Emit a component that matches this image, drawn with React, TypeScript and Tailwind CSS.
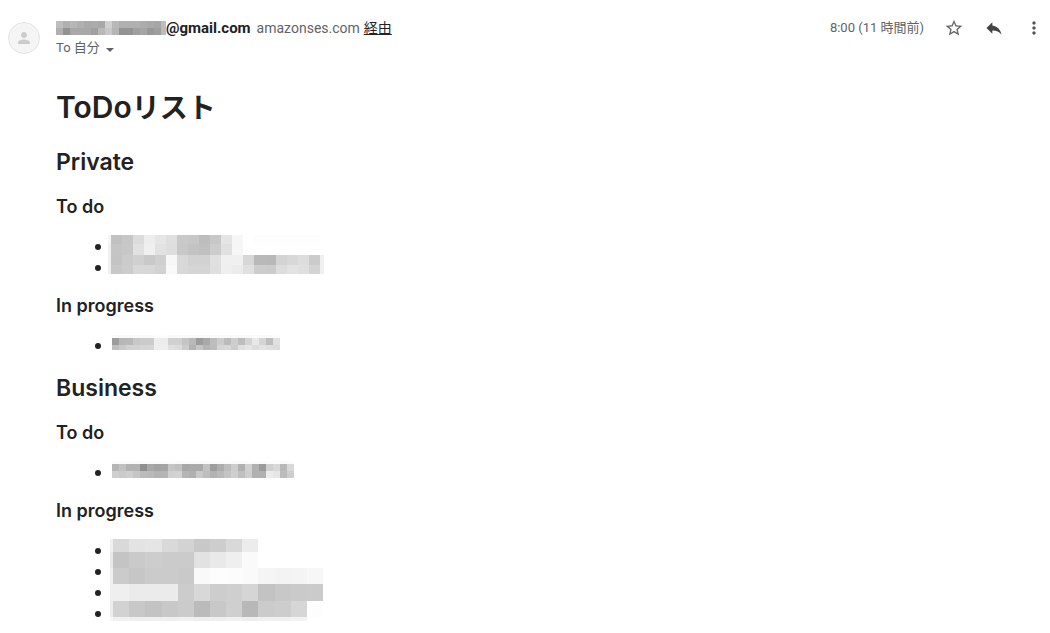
type MosaicProps = {
  label: string;
  // column and row edges, one more than there are cells
  cols: number[];
  rows: number[];
  // one string per row, two hex digits (a grey level) per cell
  shades: string[];
};

function edges(start: number, first: number, step: number, count: number) {
  return [start, ...Array.from({ length: count + 1 }, (_, i) => first + i * step)];
}

function Mosaic({ label, cols, rows, shades }: MosaicProps) {
  const width = cols[cols.length - 1];
  const height = rows[rows.length - 1];
  return (
    <svg
      role="img"
      aria-label={label}
      className="block"
      width={width}
      height={height}
      viewBox={`0 0 ${width} ${height}`}
      shapeRendering="crispEdges"
    >
      {shades.map((line, r) =>
        line.split(" ").map((s, c) => (
          <rect
            key={`${r}-${c}`}
            x={cols[c]}
            y={rows[r]}
            width={cols[c + 1] - cols[c]}
            height={rows[r + 1] - rows[r]}
            fill={`#${s}${s}${s}`}
          />
        ))
      )}
    </svg>
  );
}

const SENDER: MosaicProps = {
  label: "sender",
  cols: [...edges(0, 7, 7, 14), 110],
  rows: [0, 7, 14],
  shades: [
    "bd b0 b7 b0 aa ac a8 d0 b8 b0 b0 b0 ac a9 a5 bd",
    "b0 93 a8 a8 a8 a0 b8 c8 b5 93 93 a0 a5 98 9e bb",
  ],
};

type Group = { title: string; count: number; mosaic: MosaicProps };

const SECTIONS: { title: string; groups: Group[] }[] = [
  {
    title: "Private",
    groups: [
      {
        title: "To do",
        count: 2,
        mosaic: {
          label: "Private to do items",
          cols: [...edges(0, 3, 11, 19), 216],
          rows: [0, 9, 20, 30, 39],
          shades: [
            "f5 c1 c7 dc ed e6 df c9 c7 bd c7 e5 f6 ff fd fd fd fd fd fd",
            "f0 c5 c8 e1 f0 e2 dd c8 c3 c0 cc e0 f6",
            "f0 c4 cb d0 c9 cf f7 d8 d2 d2 e0 f0 f0 d7 b9 b8 d3 d8 dd cb f0",
            "f0 c8 cc d8 d7 d2 f9 d8 d5 d5 df ef ec e0 cd cc dd e2 df d3 f0",
          ],
        },
      },
      {
        title: "In progress",
        count: 1,
        mosaic: {
          label: "Private in progress items",
          cols: edges(3, 4, 7, 24),
          rows: [1, 4, 11, 16],
          shades: [
            "ff fa fa fa fa fa fa fc fc fa fa fa fa f9 fa fa fa fa fa fa fa fc fa fa fc",
            "ff 9d b7 b9 c8 cb cb ed ec d1 d0 c4 b9 9c a9 bd cc bb cd bd d3 e8 d5 bd e0",
            "ff bf c9 d1 d2 d5 d6 ee ee e0 dc cb b2 c5 b5 bc d5 d8 cc df e5 dd e3 df dc",
          ],
        },
      },
    ],
  },
  {
    title: "Business",
    groups: [
      {
        title: "To do",
        count: 1,
        mosaic: {
          label: "Business to do items",
          cols: edges(3, 4, 7, 26),
          rows: [0, 3, 10, 17],
          shades: [
            "ff fa fa fa fa f9 fa fa fa fb fb fa fa fa fb fa fa fb fb fa fb fa fa fc fc fa fc",
            "ff b5 c1 b2 b2 8f a8 a2 a4 c6 c0 a7 aa aa c2 9c ac bd cd b0 d0 b0 9b d0 d8 b8 d8",
            "ff ce ca ce c5 bb b9 b3 b5 d0 d2 b5 b0 c9 bd b2 b9 c4 cf bf ce b0 b0 ec e6 bc ce",
          ],
        },
      },
      {
        title: "In progress",
        count: 4,
        mosaic: {
          label: "Business in progress items",
          cols: [2, 5, 21, 37, 54, 70, 86, 102, 118, 134, 150, 167, 183, 199, 215],
          rows: [0, 13, 29, 45, 62, 78, 82],
          shades: [
            "f0 d9 e3 e5 d9 d3 c8 cd d9 ec",
            "e9 c4 ca cd cb cb e2 e9 ef fa",
            "f0 cb c6 cb cb c9 f9 fd fc fa f5 f3 f4 f7",
            "ef ef eb eb eb cc d8 cd cf d5 c3 c8 ca cb",
            "ed d2 c8 c3 c8 cb bb c8 cf b8 cb cd d6 fd",
            "f8 f1 ef ef ef f0 ee ef f1 ee f0 f0 f3 ff",
          ],
        },
      },
    ],
  },
];

function MessageHeader() {
  return (
    <header className="flex items-start pl-2 pr-1.5 font-[Roboto,'Noto_Sans_CJK_JP',sans-serif]">
      <div className="mt-1 flex h-8 w-8 shrink-0 items-center justify-center rounded-full border border-[#e4e4e4] bg-[#f5f5f5]">
        <svg width="18" height="18" viewBox="0 0 24 24" fill="#cbcbcb">
          <path d="M12 12c2.21 0 4-1.79 4-4s-1.79-4-4-4-4 1.79-4 4 1.79 4 4 4zm0 2c-2.67 0-8 1.34-8 4v2h16v-2c0-2.66-5.33-4-8-4z" />
        </svg>
      </div>

      <div className="ml-4 min-w-0 flex-1">
        <div className="flex h-5 items-center whitespace-nowrap text-sm leading-5">
          <Mosaic {...SENDER} />
          <span className="text-[15px] font-bold text-[#202124]">@gmail.com</span>
          <span className="ml-1.5 text-[#5f6368]">amazonses.com</span>
          <a href="#via" className="ml-1 text-[#222222] underline">経由</a>
        </div>
        <button className="flex h-5 items-center text-[13px] leading-5 text-[#5f6368]">
          To 自分
          <svg className="ml-1.5 mt-1" width="8" height="4" viewBox="0 0 8 4" fill="#5f6368">
            <path d="M0 0h8L4 4z" />
          </svg>
        </button>
      </div>

      <div className="flex h-5 shrink-0 items-center">
        <time className="mr-5 whitespace-nowrap text-[13px] text-[#5f6368]">8:00 (11 時間前)</time>
        <button aria-label="Star" className="mr-5">
          <svg width="20" height="20" viewBox="0 0 24 24" fill="#666666">
            <path d="M22 9.24l-7.19-.62L12 2 9.19 8.63 2 9.24l5.46 4.73L5.82 21 12 17.27 18.18 21l-1.63-7.03L22 9.24zM12 15.4l-3.76 2.27 1-4.28-3.32-2.88 4.38-.38L12 6.1l1.71 4.04 4.38.38-3.32 2.88 1 4.28L12 15.4z" />
          </svg>
        </button>
        <button aria-label="Reply" className="mr-5">
          <svg width="20" height="20" viewBox="0 0 24 24" fill="#444444">
            <path d="M10 9V5l-7 7 7 7v-4.1c5 0 8.5 1.6 11 5.1-1-5-4-10-11-11z" />
          </svg>
        </button>
        <button aria-label="More">
          <svg width="20" height="20" viewBox="0 0 24 24" fill="#555555">
            <path d="M12 8c1.1 0 2-.9 2-2s-.9-2-2-2-2 .9-2 2 .9 2 2 2zm0 2c-1.1 0-2 .9-2 2s.9 2 2 2 2-.9 2-2-.9-2-2-2zm0 6c-1.1 0-2 .9-2 2s.9 2 2 2 2-.9 2-2-.9-2-2-2z" />
          </svg>
        </button>
      </div>
    </header>
  );
}

function ItemList({ count, mosaic }: { count: number; mosaic: MosaicProps }) {
  return (
    <div className="relative">
      <ul className="pl-[39px]">
        {Array.from({ length: count }, (_, i) => (
          <li key={i} className="flex h-[21px] items-center">
            <span className="mt-0.5 h-1.5 w-1.5 rounded-full bg-[#222222]" />
          </li>
        ))}
      </ul>
      {/* Redaction laid over the item texts */}
      <div className="absolute left-[52px] top-0">
        <Mosaic {...mosaic} />
      </div>
    </div>
  );
}

export default function App() {
  return (
    <div className="min-h-screen bg-white pt-[18px]">
      <MessageHeader />
      <main className="mt-[29px] pl-14 font-[Inter,'Noto_Sans_CJK_JP',sans-serif] text-[#222222]">
        <h1 className="text-3xl font-semibold leading-10">
          ToDo<span className="text-[28px] leading-none">リスト</span>
        </h1>
        {SECTIONS.map((section, i) => (
          <section key={section.title} className={i === 0 ? "mt-5" : "mt-[18px]"}>
            <h2 className="mb-[17px] text-[23px] font-semibold leading-[30px]">{section.title}</h2>
            <div className="flex flex-col gap-4">
              {section.groups.map((group) => (
                <div key={group.title}>
                  <h3 className="mb-[15px] text-lg font-semibold leading-[26px]">{group.title}</h3>
                  <ItemList count={group.count} mosaic={group.mosaic} />
                </div>
              ))}
            </div>
          </section>
        ))}
      </main>
    </div>
  );
}
